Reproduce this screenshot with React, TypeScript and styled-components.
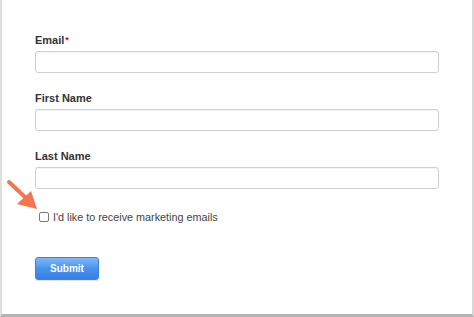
import styled, { createGlobalStyle } from 'styled-components';

const GlobalStyle = createGlobalStyle`
  html, body {
    margin: 0;
    padding: 0;
    background: #ffffff;
  }
  * {
    box-sizing: border-box;
  }
`;

const Frame = styled.div`
  position: relative;
  width: 474px;
  height: 317px;
  background: #ffffff;
  border-left: 2px solid #dedede;
  border-right: 2px solid #d8d8d8;
  border-bottom: 3px solid #b4b4b4;
  padding: 33px 0 0 33px;
  font-family: 'Liberation Sans', Arial, Helvetica, sans-serif;
`;

const Form = styled.form`
  display: flex;
  flex-direction: column;
  width: 404px;
`;

const Field = styled.div`
  display: flex;
  flex-direction: column;
  margin-bottom: 18px;
`;

const Label = styled.label`
  font-size: 11px;
  line-height: 14px;
  font-weight: 700;
  color: #333333;
  margin-bottom: 4px;
`;

const Required = styled.span`
  color: #d0021b;
  font-size: 9px;
  vertical-align: top;
  margin-left: 1px;
`;

const Input = styled.input`
  width: 100%;
  height: 22px;
  border: 1px solid #d0d0d0;
  border-radius: 3px;
  background: #ffffff;
  box-shadow: inset 0 1px 1px rgba(0, 0, 0, 0.05);
  padding: 0 6px;
  font: inherit;
  font-size: 11px;
  outline: none;
`;

const CheckRow = styled.label`
  display: flex;
  align-items: center;
  gap: 4px;
  margin-top: 3px;
  padding-left: 4px;
  font-size: 10.8px;
  line-height: 14px;
  color: #444444;
`;

const Check = styled.input`
  appearance: none;
  margin: 0;
  width: 10px;
  height: 10px;
  border: 1px solid #7a7a7a;
  border-radius: 2px;
  background: #ffffff;
`;

const SubmitButton = styled.button`
  align-self: flex-start;
  margin-top: 33px;
  width: 64px;
  height: 23px;
  border: 1px solid #3f82dd;
  border-radius: 3px;
  background: linear-gradient(#7db8f8, #4b92ee 50%, #3580e6);
  color: #ffffff;
  font-family: inherit;
  font-size: 10px;
  font-weight: 700;
  padding: 0;
  box-shadow: 0 1px 1px rgba(0, 0, 0, 0.12);
`;

const Pointer = styled.svg`
  position: absolute;
  left: 0;
  top: 176px;
  width: 40px;
  height: 36px;
`;

export default function App() {
  return (
    <>
      <GlobalStyle />
      <Frame>
        <Form onSubmit={(e) => e.preventDefault()}>
          <Field>
            <Label>
              Email<Required>*</Required>
            </Label>
            <Input type="email" />
          </Field>
          <Field>
            <Label>First Name</Label>
            <Input type="text" />
          </Field>
          <Field>
            <Label>Last Name</Label>
            <Input type="text" />
          </Field>
          <CheckRow>
            <Check type="checkbox" />
            I'd like to receive marketing emails
          </CheckRow>
          <SubmitButton type="submit">Submit</SubmitButton>
        </Form>
        <Pointer viewBox="0 0 40 36">
          <line x1="7" y1="6" x2="24" y2="22" stroke="#f4754f" strokeWidth="4" strokeLinecap="round" />
          <polygon points="35,33 15,28 29,15" fill="#f4754f" />
        </Pointer>
      </Frame>
    </>
  );
}
